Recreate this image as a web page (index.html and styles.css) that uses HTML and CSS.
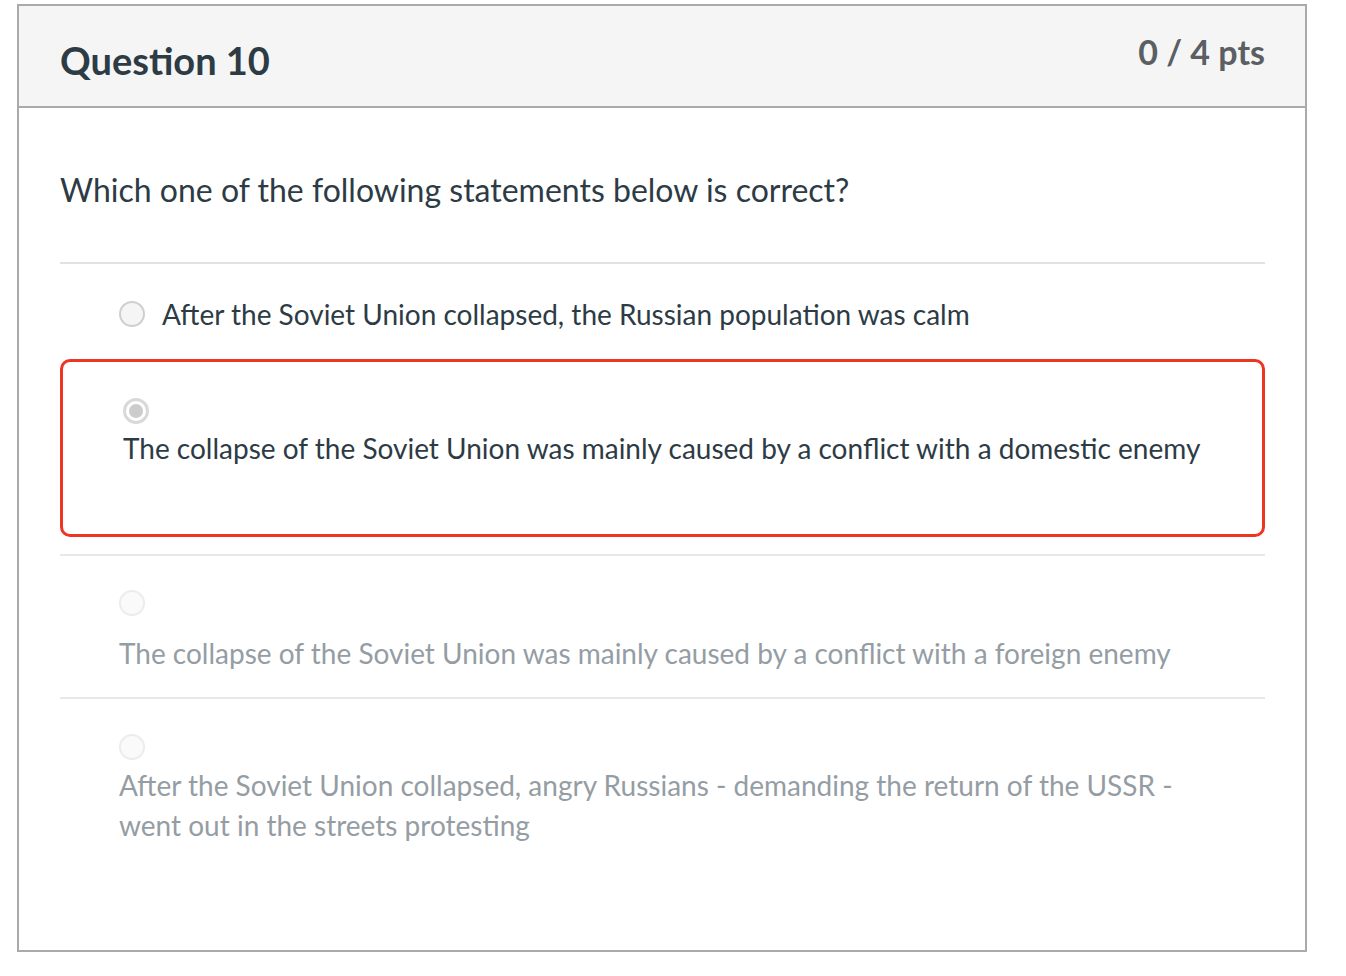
FILE: index.html
```html
<!DOCTYPE html>
<html>
<head>
<meta charset="utf-8">
<link rel="stylesheet" href="styles.css">
</head>
<body>
<div class="card">
  <div class="card-header">
    <h2 class="title">Question 10</h2>
    <div class="pts">0 / 4 pts</div>
  </div>
  <div class="card-body">
    <p class="question">Which one of the following statements below is correct?</p>
    <div class="answers">
      <div class="answer answer-first">
        <span class="radio"></span>
        <span class="answer-text">After the Soviet Union collapsed, the Russian population was calm</span>
      </div>
      <div class="answer answer-selected">
        <span class="radio radio-checked"></span>
        <div class="answer-text">The collapse of the Soviet Union was mainly caused by a conflict with a domestic enemy</div>
      </div>
      <div class="answer answer-faded answer-third">
        <span class="radio radio-faded"></span>
        <div class="answer-text">The collapse of the Soviet Union was mainly caused by a conflict with a foreign enemy</div>
      </div>
      <div class="answer answer-faded answer-last">
        <span class="radio radio-faded"></span>
        <div class="answer-text">After the Soviet Union collapsed, angry Russians - demanding the return of the USSR - went out in the streets protesting</div>
      </div>
    </div>
  </div>
</div>
</body>
</html>
```

FILE: styles.css
```css
* { box-sizing: border-box; }
body {
  margin: 0;
  background: #ffffff;
  font-family: Lato, "Open Sans", "Liberation Sans", sans-serif;
  color: #2d3b45;
}
.card {
  margin: 4px 0 0 17px;
  width: 1290px;
  height: 948px;
  border: 2px solid #aaaaaa;
}
.card-header {
  height: 102px;
  background: #f5f5f5;
  border-bottom: 2px solid #aaaaaa;
  display: flex;
  justify-content: space-between;
  align-items: flex-start;
  padding: 0 40px 0 41px;
}
.title {
  margin: 0;
  padding-top: 31px;
  font-size: 38px;
  line-height: 46px;
  font-weight: 700;
  color: #2d3b45;
}
.pts {
  padding-top: 25px;
  font-size: 34px;
  line-height: 42px;
  font-weight: 700;
  color: #5b5f63;
}
.card-body {
  padding: 0 40px 0 41px;
}
.question {
  margin: 0;
  padding: 62px 0 52px;
  font-size: 32px;
  line-height: 40px;
  border-bottom: 2px solid #e2e2e2;
}
.answer {
  font-size: 28px;
  line-height: 40px;
}
.answer-first {
  display: flex;
  align-items: center;
  gap: 17px;
  padding: 30px 0 25px 59px;
}
.answer-selected {
  border: 3px solid #ee3524;
  border-radius: 10px;
  padding: 36px 20px 66px 60px;
  margin-bottom: 17px;
}
.answer-selected .answer-text {
  margin-top: 4px;
}
.answer-faded {
  color: #959da4;
  border-top: 2px solid #e8e8e8;
  padding: 34px 40px 24px 59px;
}
.answer-third .answer-text {
  margin-top: 17px;
}
.answer-last {
  padding-top: 35px;
}
.answer-last .answer-text {
  margin-top: 5px;
}
.radio {
  display: block;
  flex: none;
  width: 26px;
  height: 26px;
  border-radius: 50%;
  border: 2px solid #cfcfcf;
  background: #f5f5f5;
  position: relative;
}
.radio-checked {
  border: 3px solid #d9d9d9;
  background: #ffffff;
}
.radio-checked::after {
  content: "";
  position: absolute;
  left: 3px;
  top: 3px;
  width: 14px;
  height: 14px;
  border-radius: 50%;
  background: #cccccc;
}
.radio-faded {
  border: 2px solid #ececec;
  background: #fafafa;
}
```
